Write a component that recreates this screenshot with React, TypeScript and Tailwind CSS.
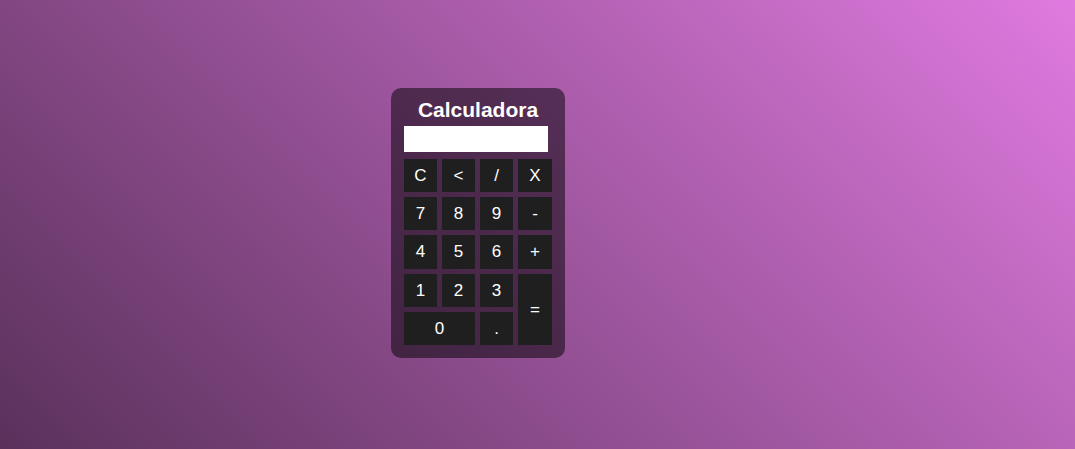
import { useState } from 'react';
import clsx from 'clsx';

type Key = {
  label: string;
  name?: string;
  span?: string;
};

const keys: Key[] = [
  { label: 'C', name: 'Limpar' },
  { label: '<', name: 'Apagar' },
  { label: '/' },
  { label: 'X' },
  { label: '7' },
  { label: '8' },
  { label: '9' },
  { label: '-' },
  { label: '4' },
  { label: '5' },
  { label: '6' },
  { label: '+' },
  { label: '1' },
  { label: '2' },
  { label: '3' },
  { label: '=', span: 'row-span-2' },
  { label: '0', span: 'col-span-2' },
  { label: '.' },
];

function evaluate(expression: string) {
  const tokens = expression.match(/\d*\.?\d+|[-+X/]/g) ?? [];
  const terms: number[] = [];
  let operator = '+';

  for (const token of tokens) {
    const value = Number(token);
    if (Number.isNaN(value)) {
      operator = token;
    } else if (operator === 'X') {
      terms.push((terms.pop() ?? 0) * value);
    } else if (operator === '/') {
      terms.push((terms.pop() ?? 0) / value);
    } else {
      terms.push(operator === '-' ? -value : value);
    }
  }

  return terms.length ? String(terms.reduce((a, b) => a + b, 0)) : '';
}

export default function App() {
  const [display, setDisplay] = useState('');

  const press = (label: string) => {
    if (label === 'C') {
      setDisplay('');
    } else if (label === '<') {
      setDisplay(display.slice(0, -1));
    } else if (label === '=') {
      setDisplay(evaluate(display));
    } else {
      setDisplay(display + label);
    }
  };

  return (
    <main className="flex min-h-screen items-center justify-center bg-linear-45/srgb from-[#5a315b] to-[#e07ae0] pr-[119px] pb-[3px] font-['Liberation_Sans',Arial,sans-serif] text-white">
      <section className="rounded-[10px] bg-black/50 p-[13px] pt-[9px]">
        <h1 className="text-center text-[21px] leading-[26px] font-bold">
          Calculadora
        </h1>

        <input
          type="text"
          readOnly
          aria-label="Resultado"
          value={display}
          className="mt-[3px] block h-[26px] w-[144px] bg-white px-1 text-right text-[17px] text-black outline-none"
        />

        <div className="mt-[7px] grid grid-cols-[33px_33px_33px_34px] grid-rows-[33px_33px_34px_33px_33px] gap-[5px]">
          {keys.map(({ label, name, span }) => (
            <button
              key={label}
              type="button"
              aria-label={name}
              onClick={() => press(label)}
              className={clsx(
                'cursor-pointer bg-[#1f1f1f] text-[17px] leading-5 hover:bg-black',
                span,
              )}
            >
              {label}
            </button>
          ))}
        </div>
      </section>
    </main>
  );
}
